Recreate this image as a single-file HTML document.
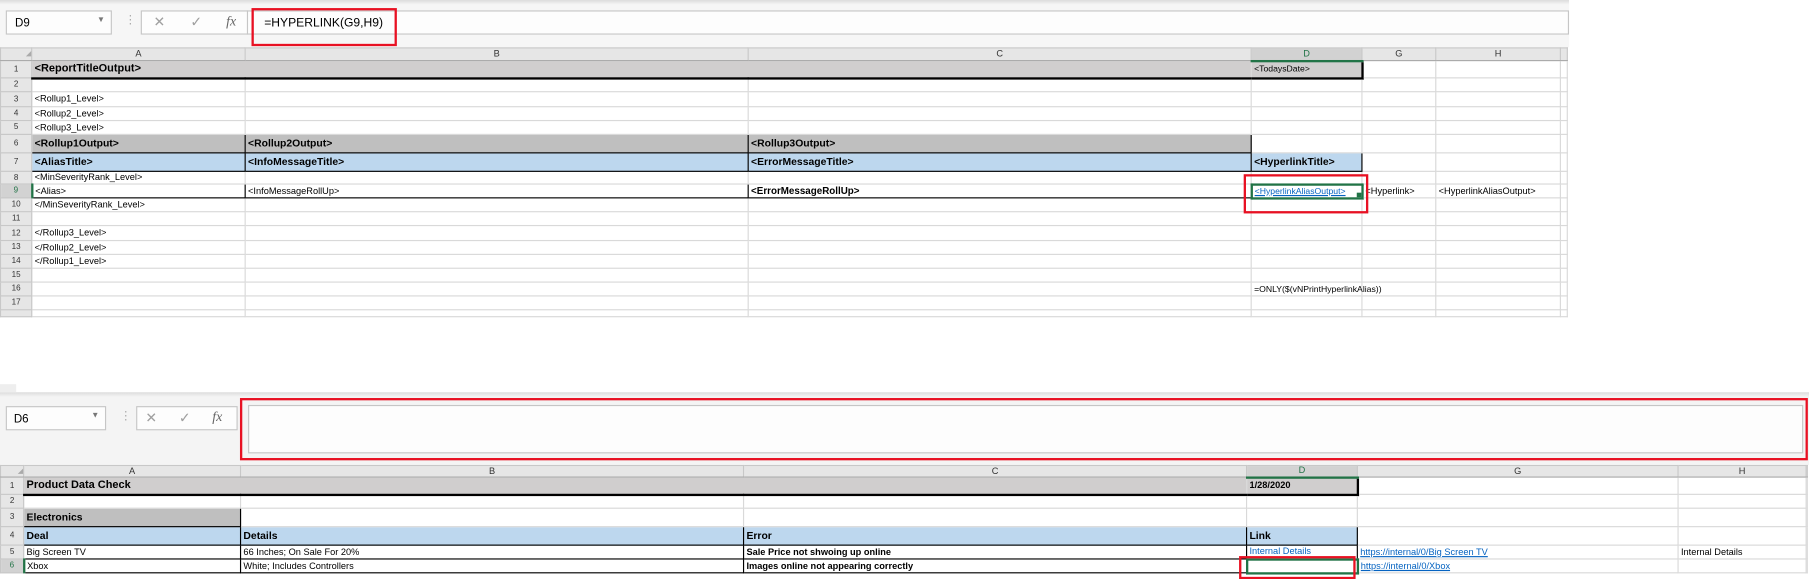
<!DOCTYPE html>
<html><head><meta charset="utf-8"><style>
html,body{margin:0;padding:0;background:#fff;overflow:hidden;width:1809px;height:574px}
#w{position:absolute;left:0;top:0;width:1568px;height:498px;transform:scale(1.1537);transform-origin:0 0;font-family:"Liberation Sans",Arial,sans-serif}
.abs{position:absolute;box-sizing:border-box}
table{border-collapse:collapse;table-layout:fixed;position:absolute}
td{border:1px solid #d9d9d9;padding:0 0 0 2px;font-size:8px;white-space:nowrap;overflow:visible;line-height:1;color:#000;vertical-align:middle}
td.rh{background:#e6e6e6;color:#333;text-align:center;padding:0;font-size:7px;border-color:#c8c8c8}
tr.ch td{background:#e6e6e6;text-align:center;padding:0;font-size:8px;color:#333;border-color:#c8c8c8;border-bottom:1px solid #ababab}
.t{background:#d0cece;font-weight:bold;font-size:9.5px}
.g{background:#bfbfbf;font-weight:bold;font-size:9px}
.b{background:#bdd7ee;font-weight:bold;font-size:9px}
.bk{border:1px solid #000}
.bb{border-bottom:2px solid #000}
.bd{font-weight:bold}
a{color:#0563c1;text-decoration:underline}
.tb{background:#f3f3f3}
.box{background:#fdfdfd;border:1px solid #c6c6c6}
.red{border:2px solid #e81123}
.ic{position:absolute;font-size:12px;color:#a0a0a0}
</style></head><body><div id="w">

<!-- TOP toolbar -->
<div class="abs tb" style="left:0;top:0;width:1360px;height:41px;background:linear-gradient(#dcdcdc 0,#f6f6f6 4px,#f6f6f6 100%)"></div>
<div class="abs box" style="left:5px;top:9px;width:92px;height:21px;font-size:10px;padding:5px 0 0 7px">D9<span style="position:absolute;right:5px;top:4px;font-size:7px;color:#777">▼</span></div>
<div class="abs" style="left:108px;top:12px;font-size:10px;color:#aaa">⋮</div>
<div class="abs box" style="left:122px;top:9px;width:1238px;height:21px"></div>
<div class="ic" style="left:133px;top:12px">✕</div>
<div class="ic" style="left:165px;top:12px">✓</div>
<div class="ic" style="left:196px;top:11px;font-style:italic;font-family:'Liberation Serif',serif;color:#666">fx</div>
<div class="abs" style="left:214px;top:9px;width:1px;height:21px;background:#c6c6c6"></div>
<div class="abs" style="left:229px;top:14px;font-size:10.5px">=HYPERLINK(G9,H9)</div>
<div class="abs red" style="left:218px;top:7px;width:126px;height:33px"></div>

<table style="left:0;top:41px;width:1358px">
<colgroup><col style="width:27px"><col style="width:185px"><col style="width:436px"><col style="width:436px"><col style="width:96px"><col style="width:64px"><col style="width:108px"><col style="width:6px"></colgroup>
<tr class="ch" style="height:11px"><td style="color:#aaa;font-size:6px;text-align:right">◢</td><td>A</td><td>B</td><td>C</td><td style="background:#d2d2d2;color:#217346;border-bottom:2px solid #217346">D</td><td>G</td><td>H</td><td></td></tr>
<tr style="height:15px"><td class="rh">1</td><td class="t bb" colspan="3">&lt;ReportTitleOutput&gt;</td><td class="t bb" style="border-right:2px solid #000;font-size:7.5px;font-weight:normal">&lt;TodaysDate&gt;</td><td></td><td></td><td></td></tr>
<tr style="height:12px"><td class="rh">2</td><td></td><td></td><td></td><td></td><td></td><td></td><td></td></tr>
<tr style="height:13px"><td class="rh">3</td><td>&lt;Rollup1_Level&gt;</td><td></td><td></td><td></td><td></td><td></td><td></td></tr>
<tr style="height:12px"><td class="rh">4</td><td>&lt;Rollup2_Level&gt;</td><td></td><td></td><td></td><td></td><td></td><td></td></tr>
<tr style="height:12px"><td class="rh">5</td><td>&lt;Rollup3_Level&gt;</td><td></td><td></td><td></td><td></td><td></td><td></td></tr>
<tr style="height:16px"><td class="rh">6</td><td class="g bk">&lt;Rollup1Output&gt;</td><td class="g bk">&lt;Rollup2Output&gt;</td><td class="g bk">&lt;Rollup3Output&gt;</td><td></td><td></td><td></td><td></td></tr>
<tr style="height:16px"><td class="rh">7</td><td class="b bk">&lt;AliasTitle&gt;</td><td class="b bk">&lt;InfoMessageTitle&gt;</td><td class="b bk">&lt;ErrorMessageTitle&gt;</td><td class="b bk">&lt;HyperlinkTitle&gt;</td><td></td><td></td><td></td></tr>
<tr style="height:11px"><td class="rh">8</td><td>&lt;MinSeverityRank_Level&gt;</td><td></td><td></td><td></td><td></td><td></td><td></td></tr>
<tr style="height:12px"><td class="rh" style="background:#d2d2d2;color:#217346;border-right:2px solid #217346">9</td><td class="bk">&lt;Alias&gt;</td><td class="bk">&lt;InfoMessageRollUp&gt;</td><td class="bk bd" style="font-size:8.5px">&lt;ErrorMessageRollUp&gt;</td><td style="border:2px solid #217346;font-size:7.5px"><a>&lt;HyperlinkAliasOutput&gt;</a></td><td>&lt;Hyperlink&gt;</td><td>&lt;HyperlinkAliasOutput&gt;</td><td></td></tr>
<tr style="height:12px"><td class="rh">10</td><td>&lt;/MinSeverityRank_Level&gt;</td><td></td><td></td><td></td><td></td><td></td><td></td></tr>
<tr style="height:12px"><td class="rh">11</td><td></td><td></td><td></td><td></td><td></td><td></td><td></td></tr>
<tr style="height:13px"><td class="rh">12</td><td>&lt;/Rollup3_Level&gt;</td><td></td><td></td><td></td><td></td><td></td><td></td></tr>
<tr style="height:12px"><td class="rh">13</td><td>&lt;/Rollup2_Level&gt;</td><td></td><td></td><td></td><td></td><td></td><td></td></tr>
<tr style="height:12px"><td class="rh">14</td><td>&lt;/Rollup1_Level&gt;</td><td></td><td></td><td></td><td></td><td></td><td></td></tr>
<tr style="height:12px"><td class="rh">15</td><td></td><td></td><td></td><td></td><td></td><td></td><td></td></tr>
<tr style="height:12px"><td class="rh">16</td><td></td><td></td><td></td><td style="font-size:7.5px">=ONLY($(vNPrintHyperlinkAlias))</td><td></td><td></td><td></td></tr>
<tr style="height:12px"><td class="rh">17</td><td></td><td></td><td></td><td></td><td></td><td></td><td></td></tr>
<tr style="height:6px"><td class="rh"></td><td></td><td></td><td></td><td></td><td></td><td></td><td></td></tr>
</table>
<div class="abs" style="left:0;top:276px;width:1568px;height:64px;background:#fff"></div>
<div class="abs red" style="left:1078px;top:151px;width:108px;height:34px"></div>
<div class="abs" style="left:1176px;top:167px;width:4px;height:4px;background:#217346"></div>

<!-- BOTTOM toolbar -->
<div class="abs" style="left:0;top:340px;width:1568px;height:63px;background:linear-gradient(#dcdcdc 0,#f4f4f4 4px,#f4f4f4 100%)"></div>
<div class="abs" style="left:0;top:333px;width:14px;height:7px;background:#eee"></div>
<div class="abs box" style="left:5px;top:352px;width:87px;height:21px;font-size:10px;padding:5px 0 0 6px">D6<span style="position:absolute;right:5px;top:4px;font-size:7px;color:#777">▼</span></div>
<div class="abs" style="left:104px;top:355px;font-size:10px;color:#aaa">⋮</div>
<div class="abs box" style="left:118px;top:352px;width:88px;height:21px"></div>
<div class="ic" style="left:126px;top:355px">✕</div>
<div class="ic" style="left:155px;top:355px">✓</div>
<div class="ic" style="left:184px;top:354px;font-style:italic;font-family:'Liberation Serif',serif;color:#666">fx</div>
<div class="abs box" style="left:215px;top:351px;width:1348px;height:42px"></div>
<div class="abs red" style="left:208px;top:345px;width:1359px;height:54px"></div>

<table style="left:0;top:403px;width:1566px">
<colgroup><col style="width:20px"><col style="width:188px"><col style="width:436px"><col style="width:436px"><col style="width:96px"><col style="width:278px"><col style="width:111px"><col style="width:1px"></colgroup>
<tr class="ch" style="height:10px"><td style="color:#aaa;font-size:6px;text-align:right">◢</td><td>A</td><td>B</td><td>C</td><td style="background:#d2d2d2;color:#217346;border-bottom:2px solid #217346">D</td><td>G</td><td>H</td><td></td></tr>
<tr style="height:15px"><td class="rh">1</td><td class="t bb" colspan="3">Product Data Check</td><td class="t bb" style="border-right:2px solid #000;font-size:8px">1/28/2020</td><td></td><td></td><td></td></tr>
<tr style="height:12px"><td class="rh">2</td><td></td><td></td><td></td><td></td><td></td><td></td><td></td></tr>
<tr style="height:16px"><td class="rh">3</td><td class="g bk">Electronics</td><td></td><td></td><td></td><td></td><td></td><td></td></tr>
<tr style="height:16px"><td class="rh">4</td><td class="b bk">Deal</td><td class="b bk">Details</td><td class="b bk">Error</td><td class="b bk">Link</td><td></td><td></td><td></td></tr>
<tr style="height:12px"><td class="rh">5</td><td class="bk">Big Screen TV</td><td class="bk">66 Inches; On Sale For 20%</td><td class="bk bd">Sale Price not shwoing up online</td><td class="bk"><a style="text-decoration:none">Internal Details</a></td><td><a>https://internal/0/Big Screen TV</a></td><td>Internal Details</td><td></td></tr>
<tr style="height:12px"><td class="rh" style="background:#d2d2d2;color:#217346;border-right:2px solid #217346">6</td><td class="bk">Xbox</td><td class="bk">White; Includes Controllers</td><td class="bk bd">Images online not appearing correctly</td><td style="border:2px solid #217346"></td><td><a>https://internal/0/Xbox</a></td><td></td><td></td></tr>
</table>
<div class="abs red" style="left:1074px;top:482px;width:101px;height:20px"></div>
</div></body></html>
